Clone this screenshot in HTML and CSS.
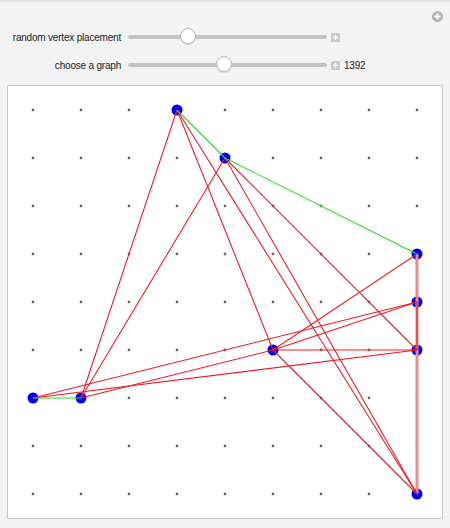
FILE: index.html
```html
<!DOCTYPE html>
<html>
<head>
<meta charset="utf-8">
<link rel="stylesheet" href="styles.css">
</head>
<body>
<div class="app">
  <div class="topbar">
    <svg class="add-icon" width="11" height="11" viewBox="0 0 11 11">
      <circle cx="5.5" cy="5.5" r="5.5" fill="#b4b4b4"/>
      <rect x="2.5" y="4.6" width="6" height="1.8" fill="#fff"/>
      <rect x="4.6" y="2.5" width="1.8" height="6" fill="#fff"/>
    </svg>
  </div>
  <div class="row">
    <div class="label">random vertex placement</div>
    <div class="slider"><div class="track"></div><div class="thumb" style="left:52px"></div></div>
    <svg class="plus" width="9" height="9" viewBox="0 0 9 9">
      <rect width="9" height="9" rx="1" fill="#cacaca"/>
      <rect x="2" y="3.8" width="5" height="1.4" fill="#fff"/>
      <rect x="3.8" y="2" width="1.4" height="5" fill="#fff"/>
    </svg>
  </div>
  <div class="row">
    <div class="label">choose a graph</div>
    <div class="slider"><div class="track"></div><div class="thumb" style="left:88px"></div></div>
    <svg class="plus" width="9" height="9" viewBox="0 0 9 9">
      <rect width="9" height="9" rx="1" fill="#cacaca"/>
      <rect x="2" y="3.8" width="5" height="1.4" fill="#fff"/>
      <rect x="3.8" y="2" width="1.4" height="5" fill="#fff"/>
    </svg>
    <div class="value">1392</div>
  </div>
  <div class="panel">
    <svg class="graph" width="434" height="432" viewBox="8 86 434 432">
      <g fill="#6e6e6e" id="dots"></g>
      <g fill="#0000ee">
        <circle cx="177" cy="110" r="5.5"/>
        <circle cx="225" cy="158" r="5.5"/>
        <circle cx="417" cy="254" r="5.5"/>
        <circle cx="417" cy="302" r="5.5"/>
        <circle cx="417" cy="350" r="5.5"/>
        <circle cx="273" cy="350" r="5.5"/>
        <circle cx="33" cy="398" r="5.5"/>
        <circle cx="81" cy="398" r="5.5"/>
        <circle cx="417" cy="494" r="5.5"/>
      </g>
      <line x1="417" y1="254" x2="417" y2="494" stroke="#e68c8c" stroke-width="3"/>
      <g stroke="#ee1c24" stroke-width="1.1" fill="none">
        <line x1="177" y1="110" x2="81" y2="398"/>
        <line x1="177" y1="110" x2="273" y2="350"/>
        <line x1="177" y1="110" x2="417" y2="494"/>
        <line x1="225" y1="158" x2="81" y2="398"/>
        <line x1="225" y1="158" x2="417" y2="350"/>
        <line x1="225" y1="158" x2="417" y2="494"/>
        <line x1="417" y1="254" x2="273" y2="350"/>
        <line x1="417" y1="302" x2="417" y2="350"/>
        <line x1="417" y1="302" x2="273" y2="350"/>
        <line x1="417" y1="302" x2="33" y2="398"/>
        <line x1="273" y1="350" x2="81" y2="398"/>
        <line x1="417" y1="350" x2="33" y2="398"/>
        <line x1="273" y1="350" x2="417" y2="350"/>
        <line x1="273" y1="350" x2="417" y2="494"/>
      </g>
      <g stroke="#22dd22" stroke-width="1.1">
        <line x1="177" y1="110" x2="225" y2="158"/>
        <line x1="225" y1="158" x2="417" y2="254"/>
        <line x1="33" y1="398" x2="81" y2="398"/>
      </g>
    </svg>
  </div>
</div>
<script src="script.js"></script>
</body>
</html>
```
FILE: script.js
```js
(function () {
  var g = document.getElementById('dots');
  var ns = 'http://www.w3.org/2000/svg';
  for (var i = 0; i < 9; i++) {
    for (var j = 0; j < 9; j++) {
      var c = document.createElementNS(ns, 'circle');
      c.setAttribute('cx', 33 + 48 * i);
      c.setAttribute('cy', 110 + 48 * j);
      c.setAttribute('r', 1.4);
      g.appendChild(c);
    }
  }
})();
```
FILE: styles.css
```css
html, body {
  margin: 0;
  padding: 0;
}
body {
  background: #f3f3f3;
  font-family: "Liberation Sans", Arial, sans-serif;
  color: #222;
  width: 450px;
  height: 528px;
  overflow: hidden;
}
.app {
  border-top: 2px solid #e4e4e4;
}
.topbar {
  height: 21px;
  display: flex;
  justify-content: flex-end;
  align-items: flex-start;
  padding-right: 7px;
}
.add-icon {
  margin-top: 9px;
  display: block;
}
.row {
  height: 28px;
  display: flex;
  align-items: center;
}
.label {
  width: 128px;
  box-sizing: border-box;
  padding-right: 7px;
  text-align: right;
  font-size: 10px;
  letter-spacing: -0.2px;
  white-space: nowrap;
}
.slider {
  position: relative;
  width: 199px;
  height: 18px;
  display: flex;
  align-items: center;
}
.track {
  width: 100%;
  height: 4px;
  border-radius: 2px;
  background: #c3c3c3;
}
.thumb {
  position: absolute;
  top: 0;
  width: 16px;
  height: 16px;
  box-sizing: border-box;
  border-radius: 50%;
  background: #fff;
  border: 1px solid #b8b8b8;
  box-shadow: 0 1px 1px rgba(0, 0, 0, 0.12);
}
.plus {
  display: block;
  margin-left: 4px;
}
.value {
  margin-left: 4px;
  font-size: 10px;
  letter-spacing: -0.2px;
}
.panel {
  margin: 6px 7px 0 7px;
  width: 436px;
  height: 434px;
  box-sizing: border-box;
  border: 1px solid #c6c6c6;
  background: #fff;
}
.graph {
  display: block;
}
```
